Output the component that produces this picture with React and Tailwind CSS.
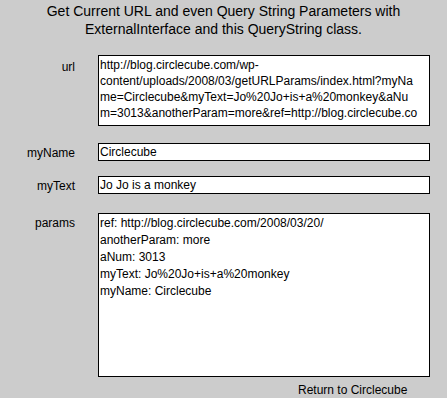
export default function App() {
  const font = { fontFamily: '"Liberation Sans", Arial, sans-serif' };
  return (
    <div className="w-[447px] h-[398px] bg-[#cccccc] overflow-hidden text-black" style={font}>
      <div className="pt-[2px] text-center text-[14px] leading-[18px]">
        Get Current URL and even Query String Parameters with
        <br />
        ExternalInterface and this QueryString class.
      </div>

      <div className="mt-[17px] flex flex-col">
        <div className="flex items-start">
          <div className="w-[75px] pt-[4px] text-right text-[12px] leading-[16px]">url</div>
          <div className="ml-[23px] w-[332px] h-[71px] border border-black bg-white px-[1px] pt-[1px] text-[12px] leading-[16px] whitespace-nowrap overflow-hidden">
            <div>http://blog.circlecube.com/wp-</div>
            <div>content/uploads/2008/03/getURLParams/index.html?myNa</div>
            <div>me=Circlecube&amp;myText=Jo%20Jo+is+a%20monkey&amp;aNu</div>
            <div>m=3013&amp;anotherParam=more&amp;ref=http://blog.circlecube.co</div>
          </div>
        </div>

        <div className="mt-[17px] flex items-start">
          <div className="w-[75px] pt-[2px] text-right text-[12px] leading-[16px]">myName</div>
          <div className="ml-[23px] w-[332px] h-[18px] border border-black bg-white px-[1px] text-[12px] leading-[16px] whitespace-nowrap overflow-hidden">
            Circlecube
          </div>
        </div>

        <div className="mt-[15px] flex items-start">
          <div className="w-[75px] pt-[2px] text-right text-[12px] leading-[16px]">myText</div>
          <div className="ml-[23px] w-[332px] h-[18px] border border-black bg-white px-[1px] text-[12px] leading-[16px] whitespace-nowrap overflow-hidden">
            Jo Jo is a monkey
          </div>
        </div>

        <div className="mt-[19px] flex items-start">
          <div className="w-[75px] pt-[2px] text-right text-[12px] leading-[16px]">params</div>
          <div className="ml-[23px] w-[332px] h-[164px] border border-black bg-white px-[1px] pt-[1px] text-[12px] leading-[17px] whitespace-nowrap overflow-hidden">
            <div>ref: http://blog.circlecube.com/2008/03/20/</div>
            <div>anotherParam: more</div>
            <div>aNum: 3013</div>
            <div>myText: Jo%20Jo+is+a%20monkey</div>
            <div>myName: Circlecube</div>
          </div>
        </div>

        <div className="mt-[5px] pl-[298px] text-[12px] leading-[16px]">Return to Circlecube</div>
      </div>
    </div>
  );
}
